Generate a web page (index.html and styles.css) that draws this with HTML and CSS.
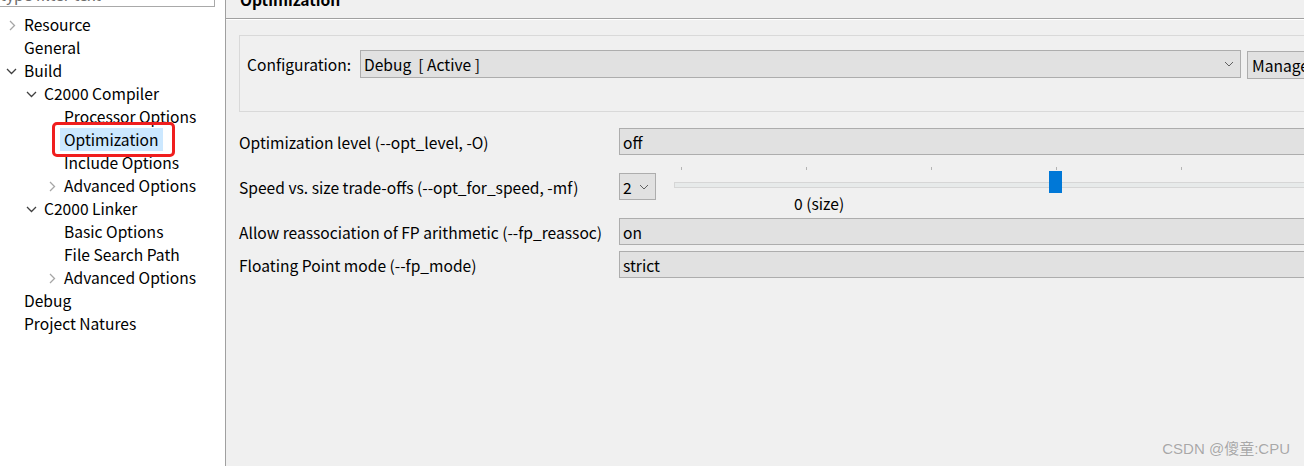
FILE: index.html
```html
<!DOCTYPE html>
<html lang="en">
<head>
<meta charset="utf-8">
<title>Properties - Optimization</title>
<link rel="stylesheet" href="styles.css">
</head>
<body>
<div class="app">
  <aside class="nav">
    <div class="filter">type filter text</div>
    <ul class="tree">
      <li class="row l0"><span class="tw"><svg viewBox="0 0 16 16"><path class="col" d="M6 4 L10.5 8.5 L6 13"/></svg></span><span class="lbl">Resource</span></li>
      <li class="row l0"><span class="tw"></span><span class="lbl">General</span></li>
      <li class="row l0"><span class="tw"><svg viewBox="0 0 16 16"><path class="exp" d="M3 6 L7.5 10.5 L12 6"/></svg></span><span class="lbl">Build</span></li>
      <li class="row l1"><span class="tw"><svg viewBox="0 0 16 16"><path class="exp" d="M3 6 L7.5 10.5 L12 6"/></svg></span><span class="lbl">C2000 Compiler</span></li>
      <li class="row l2"><span class="tw"></span><span class="lbl">Processor Options</span></li>
      <li class="row l2"><span class="tw"></span><span class="lbl sel">Optimization<span class="mark"></span></span></li>
      <li class="row l2"><span class="tw"></span><span class="lbl">Include Options</span></li>
      <li class="row l2"><span class="tw"><svg viewBox="0 0 16 16"><path class="col" d="M6 4 L10.5 8.5 L6 13"/></svg></span><span class="lbl">Advanced Options</span></li>
      <li class="row l1"><span class="tw"><svg viewBox="0 0 16 16"><path class="exp" d="M3 6 L7.5 10.5 L12 6"/></svg></span><span class="lbl">C2000 Linker</span></li>
      <li class="row l2"><span class="tw"></span><span class="lbl">Basic Options</span></li>
      <li class="row l2"><span class="tw"></span><span class="lbl">File Search Path</span></li>
      <li class="row l2"><span class="tw"><svg viewBox="0 0 16 16"><path class="col" d="M6 4 L10.5 8.5 L6 13"/></svg></span><span class="lbl">Advanced Options</span></li>
      <li class="row l0"><span class="tw"></span><span class="lbl">Debug</span></li>
      <li class="row l0"><span class="tw"></span><span class="lbl">Project Natures</span></li>
    </ul>
  </aside>
  <main class="page">
    <header class="head"><h1 class="title">Optimization</h1></header>
    <div class="content">
      <div class="group">
        <span class="cfg-label">Configuration:</span>
        <div class="combo cfg-combo"><span class="val">Debug  [ Active ]</span><svg class="chev" viewBox="0 0 10 6"><path d="M1 1 L5 5 L9 1"/></svg></div>
        <div class="btn">Manage Configurations...</div>
      </div>
      <div class="opts">
        <div class="olabel">Optimization level (--opt_level, -O)</div>
        <div class="combo wide"><span class="val">off</span></div>

        <div class="olabel">Speed vs. size trade-offs (--opt_for_speed, -mf)</div>
        <div class="speed">
          <div class="combo small"><span class="val">2</span><svg class="chev" viewBox="0 0 10 6"><path d="M1 1 L5 5 L9 1"/></svg></div>
          <div class="slider">
            <div class="ticks"></div>
            <div class="track"></div>
            <div class="thumb"></div>
            <div class="slabel">0 (size)</div>
          </div>
        </div>

        <div class="olabel">Allow reassociation of FP arithmetic (--fp_reassoc)</div>
        <div class="combo wide"><span class="val">on</span></div>

        <div class="olabel">Floating Point mode (--fp_mode)</div>
        <div class="combo wide"><span class="val">strict</span></div>
      </div>
    </div>
    <div class="watermark">CSDN @傻童:CPU</div>
  </main>
</div>
</body>
</html>
```
FILE: styles.css
```css
* { box-sizing: border-box; }
html, body { margin: 0; padding: 0; }
body {
  width: 1304px;
  height: 466px;
  overflow: hidden;
  font-family: "Noto Sans CJK SC", "Noto Sans", sans-serif;
  font-size: 15.6px;
  color: #000;
  background: #f0f0f0;
}
.app {
  display: flex;
  height: 466px;
}

/* ---------- navigation tree ---------- */
.nav {
  width: 226px;
  flex: none;
  background: #fff;
  border-right: 1px solid #a0a0a0;
  overflow: hidden;
}
.filter {
  margin: -18px 0 0 -4px;
  width: 219px;
  height: 25px;
  border: 1px solid #a9a9a9;
  background: #fff;
  color: #6d6d6d;
  padding-left: 3px;
  line-height: 23px;
  white-space: nowrap;
}
.tree {
  list-style: none;
  margin: 6px 0 0;
  padding: 0;
}
.row {
  display: flex;
  align-items: center;
  height: 23px;
  white-space: nowrap;
}
.l1 { padding-left: 20px; }
.l2 { padding-left: 40px; }
.tw {
  width: 24px;
  height: 23px;
  flex: none;
  display: flex;
  align-items: center;
}
.tw svg {
  width: 16px;
  height: 16px;
  margin-left: 4px;
  fill: none;
  stroke-width: 1.3;
}
.tw .col { stroke: #a6a6a6; }
.tw .exp { stroke: #404040; }
.lbl {
  line-height: 23px;
}
.lbl.sel {
  position: relative;
  background: #cce8ff;
  margin-left: -4px;
  padding: 0 4px;
}
.mark {
  position: absolute;
  left: -8px;
  top: -6px;
  right: -12px;
  bottom: -6px;
  border: 3px solid #f01e1e;
  border-radius: 5px;
}

/* ---------- page ---------- */
.page {
  flex: 1;
  position: relative;
  overflow: hidden;
  background: #f0f0f0;
}
.head {
  display: flow-root;
  height: 19px;
  border-bottom: 1px solid #a0a0a0;
  box-shadow: 0 1px 0 #fff;
  padding-left: 14px;
}
.title {
  margin: -11px 0 0;
  font-size: 15.6px;
  font-weight: bold;
  line-height: 20px;
  white-space: nowrap;
}
.content {
  width: 1160px;
  padding-left: 13px;
}
.group {
  margin-top: 16px;
  height: 77px;
  border: 1px solid #d9d9d9;
  display: flex;
  align-items: flex-start;
  padding: 14px 0 0 7px;
}
.cfg-label {
  width: 113px;
  flex: none;
  line-height: 28px;
  white-space: nowrap;
}
.combo {
  display: flex;
  align-items: center;
  justify-content: space-between;
  background: #e1e1e1;
  border: 1px solid #adadad;
  padding: 0 6px 0 3px;
  white-space: pre;
  line-height: 20px;
}
.chev {
  width: 10px;
  height: 6px;
  fill: none;
  stroke: #606060;
  stroke-width: 1;
  flex: none;
}
.cfg-combo {
  width: 881px;
  height: 28px;
  flex: none;
}
.btn {
  margin: 1px 0 0 6px;
  height: 28px;
  width: 160px;
  flex: none;
  background: #e1e1e1;
  border: 1px solid #adadad;
  padding-left: 4px;
  line-height: 26px;
  white-space: nowrap;
}

.opts {
  margin-top: 16px;
  display: grid;
  grid-template-columns: 380px 1fr;
  grid-template-rows: 27px 51px 27px 27px;
  row-gap: 6px;
}
.olabel {
  align-self: center;
  white-space: nowrap;
  line-height: 20px;
}
.wide {
  height: 27px;
}
.speed {
  display: flex;
  align-items: flex-start;
}
.small {
  width: 37px;
  height: 27px;
  margin-top: 12px;
  flex: none;
}
.slider {
  position: relative;
  flex: 1;
  height: 51px;
  margin-left: 18px;
}
.ticks {
  position: absolute;
  left: 7px;
  right: 0;
  top: 6px;
  height: 3px;
  background: repeating-linear-gradient(90deg, #b4b4b4 0 1px, transparent 1px 125px);
}
.track {
  position: absolute;
  left: 0;
  right: 0;
  top: 21px;
  height: 6px;
  background: #e7eaea;
  border: 1px solid #d6d6d6;
}
.thumb {
  position: absolute;
  left: 375px;
  top: 10px;
  width: 13px;
  height: 22px;
  background: #0078d7;
}
.slabel {
  position: absolute;
  left: 120px;
  top: 33px;
  line-height: 18px;
  white-space: nowrap;
}
.watermark {
  position: absolute;
  right: 14px;
  top: 438px;
  font-family: "Liberation Sans", "Noto Sans CJK SC", sans-serif;
  font-size: 15px;
  line-height: 22px;
  color: #a8a8a8;
  text-shadow: 0 0 1px #fff;
  white-space: nowrap;
}
```
